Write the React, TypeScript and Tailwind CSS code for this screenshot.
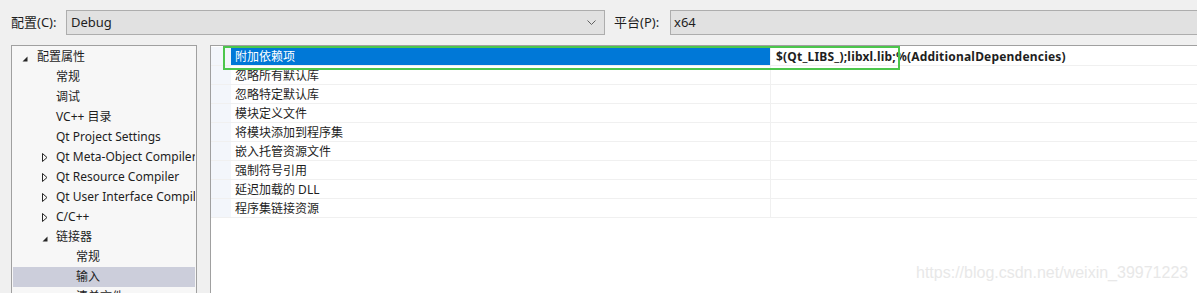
const ui = "font-['Noto_Sans','Noto_Sans_CJK_SC',sans-serif]";

type TreeItem = { label: string; indent: number; mark?: "open" | "closed"; selected?: boolean };

const tree: TreeItem[] = [
  { label: "配置属性", indent: 0, mark: "open" },
  { label: "常规", indent: 1 },
  { label: "调试", indent: 1 },
  { label: "VC++ 目录", indent: 1 },
  { label: "Qt Project Settings", indent: 1 },
  { label: "Qt Meta-Object Compiler", indent: 1, mark: "closed" },
  { label: "Qt Resource Compiler", indent: 1, mark: "closed" },
  { label: "Qt User Interface Compiler", indent: 1, mark: "closed" },
  { label: "C/C++", indent: 1, mark: "closed" },
  { label: "链接器", indent: 1, mark: "open" },
  { label: "常规", indent: 2 },
  { label: "输入", indent: 2, selected: true },
  { label: "清单文件", indent: 2 },
];

const props = [
  "附加依赖项",
  "忽略所有默认库",
  "忽略特定默认库",
  "模块定义文件",
  "将模块添加到程序集",
  "嵌入托管资源文件",
  "强制符号引用",
  "延迟加载的 DLL",
  "程序集链接资源",
];

const Mark = ({ kind }: { kind: "open" | "closed" }) =>
  kind === "open" ? (
    <svg width="6" height="6" viewBox="0 0 6 6" className="mt-[3px]">
      <polygon points="5.5,0.5 5.5,5.5 0.5,5.5" fill="#262626" />
    </svg>
  ) : (
    <svg width="6" height="9" viewBox="0 0 6 9">
      <polygon points="0.5,0.5 5,4.5 0.5,8.5" fill="none" stroke="#262626" strokeWidth="1" />
    </svg>
  );

const TreeRow = ({ item }: { item: TreeItem }) => {
  // text starts at x=37 / 56 / 76 on the page
  const pad = ["pl-[24px]", "pl-[43px]", "pl-[63px]"][item.indent];
  const markPos = ["left-[9px]", "left-[29px]", "left-[30px]"][item.indent];
  return (
    <div
      className={`relative h-[20px] flex items-center whitespace-nowrap overflow-hidden ${pad} ${
        item.selected ? "bg-[#cccedb]" : ""
      }`}
    >
      {item.mark && (
        <span className={`absolute top-0 h-[20px] flex items-center ${markPos}`}>
          <Mark kind={item.mark} />
        </span>
      )}
      <span className="leading-none">{item.label}</span>
    </div>
  );
};

export default function App() {
  return (
    <div className={`relative w-[1197px] h-[293px] overflow-hidden bg-[#f0f0f0] text-[#1e1e1e] ${ui}`}>
      {/* config / platform bar */}
      <div className="h-[45px] pt-[10px] flex text-[13px]">
        <div className="w-[66px] pl-[11px] h-[25px] flex items-center whitespace-nowrap">配置(C):</div>
        <div className="w-[539px] h-[25px] bg-[#e1e1e1] border border-[#adadad] flex items-center pl-[4px] relative">
          Debug
          <svg className="absolute right-[8px] top-[9px]" width="9" height="6" viewBox="0 0 9 6">
            <polyline points="0.5,0.5 4.5,4.5 8.5,0.5" fill="none" stroke="#606060" strokeWidth="1" />
          </svg>
        </div>
        <div className="w-[65px] pl-[9px] h-[25px] flex items-center whitespace-nowrap">平台(P):</div>
        <div className="flex-1 h-[25px] bg-[#e1e1e1] border border-r-0 border-[#adadad] flex items-center pl-[3px]">
          x64
        </div>
      </div>

      <div className="flex text-[12px]">
        {/* category tree */}
        <div className="ml-[11px] w-[186px] h-[260px] border border-[#a0a0a0] bg-[#f7f7f7] p-[1px]">
          {tree.map((t, i) => (
            <TreeRow key={i} item={t} />
          ))}
        </div>

        {/* property grid */}
        <div className="ml-[13px] flex-1 h-[260px] border-t border-l border-[#a0a0a0] bg-white pt-[1px]">
          {props.map((p, i) => (
            <div key={i} className="flex h-[19px] border-b border-[#f0f0f0]">
              <div className="w-[20px] bg-[#f3f6fb]" />
              <div
                className={`w-[540px] border-r border-[#f0f0f0] flex items-center pl-[4px] pt-[2px] ${
                  i === 0 ? "bg-[#0078d7] text-white" : ""
                }`}
              >
                {p}
              </div>
              <div className="flex-1 flex items-center pl-[5px] pt-[2px] font-bold whitespace-nowrap tracking-[0.2px]">
                {i === 0 ? "$(Qt_LIBS_);libxl.lib;%(AdditionalDependencies)" : ""}
              </div>
            </div>
          ))}
        </div>
      </div>

      {/* annotation frame */}
      <div className="absolute left-[223px] top-[46px] w-[677px] h-[24px] border-2 border-[#4cc64c]" />

      {/* watermark */}
      <div className="absolute left-[916px] top-[261px] text-[16px] text-[#e8e8e8] font-['Liberation_Sans',sans-serif]">
        https://blog.csdn.net/weixin_39971223
      </div>
    </div>
  );
}
